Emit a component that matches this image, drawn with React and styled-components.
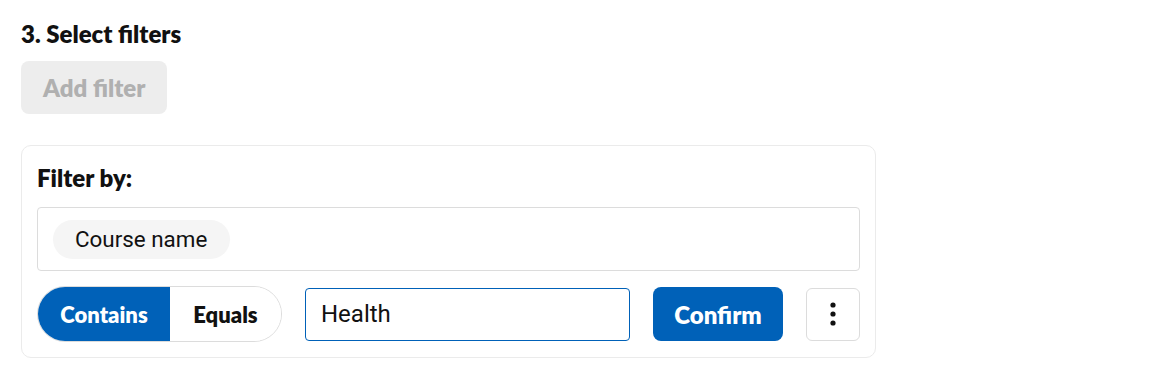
import React from 'react';
import styled, { createGlobalStyle } from 'styled-components';

const GlobalStyle = createGlobalStyle`
  body {
    margin: 0;
    background: #ffffff;
    font-family: 'Lato', 'Liberation Sans', sans-serif;
    color: #111111;
  }
`;

const Page = styled.div`
  padding: 20px 21px;
  width: 855px;
`;

const Heading = styled.h3`
  margin: 0;
  font-family: 'Lato', sans-serif;
  font-weight: 800;
  font-size: 24px;
  line-height: 28px;
  color: #111111;
`;

const AddButton = styled.button`
  margin-top: 13px;
  height: 53px;
  padding: 0 22px;
  border: none;
  border-radius: 8px;
  background: #ededed;
  color: #b0b0b0;
  font-family: 'Lato', sans-serif;
  font-weight: 800;
  font-size: 24px;
  cursor: not-allowed;
`;

const Card = styled.div`
  margin-top: 31px;
  border: 1px solid #ebebeb;
  border-radius: 10px;
  padding: 18px 15px 15px;
  display: flex;
  flex-direction: column;
`;

const Label = styled.div`
  font-family: 'Lato', sans-serif;
  font-weight: 800;
  font-size: 24px;
  line-height: 28px;
`;

const FieldBox = styled.div`
  margin-top: 15px;
  height: 62px;
  border: 1px solid #dcdcdc;
  border-radius: 4px;
  padding: 0 15px;
  display: flex;
  align-items: center;
`;

const Chip = styled.span`
  height: 39px;
  padding: 0 23px 0 22px;
  border-radius: 20px;
  background: #f5f5f5;
  display: inline-flex;
  align-items: center;
  font-family: 'Roboto', sans-serif;
  font-size: 22.4px;
  color: #111111;
`;

const Row = styled.div`
  margin-top: 15px;
  display: flex;
  align-items: center;
  gap: 23px;
`;

const Segmented = styled.div`
  height: 54px;
  display: flex;
  border: 1px solid #dcdcdc;
  border-radius: 28px;
  overflow: hidden;
`;

const Segment = styled.button`
  width: ${p => p.$w}px;
  border: none;
  background: ${p => (p.$active ? '#0061b8' : '#ffffff')};
  color: ${p => (p.$active ? '#ffffff' : '#111111')};
  font-family: 'Lato', sans-serif;
  font-weight: 800;
  font-size: 22px;
  padding: 0;
`;

const TextInput = styled.input`
  box-sizing: border-box;
  width: 325px;
  height: 53px;
  border: 1px solid #0061b8;
  border-radius: 4px;
  padding: 0 15px;
  font-family: 'Roboto', sans-serif;
  font-size: 24px;
  color: #111111;
  outline: none;
`;

const ConfirmButton = styled.button`
  width: 130px;
  height: 54px;
  border: none;
  border-radius: 8px;
  background: #0061b8;
  color: #ffffff;
  font-family: 'Lato', sans-serif;
  font-weight: 800;
  font-size: 24px;
`;

const MenuButton = styled.button`
  width: 54px;
  height: 53px;
  border: 1px solid #dcdcdc;
  border-radius: 6px;
  background: #ffffff;
  display: flex;
  align-items: center;
  justify-content: center;
  padding: 0;
`;

const Kebab = () => (
  <svg width="6" height="24" viewBox="0 0 6 24">
    <circle cx="3" cy="3" r="2.6" fill="#111" />
    <circle cx="3" cy="12" r="2.6" fill="#111" />
    <circle cx="3" cy="21" r="2.6" fill="#111" />
  </svg>
);

export default function App() {
  return (
    <Page>
      <GlobalStyle />
      <Heading>3. Select filters</Heading>
      <AddButton disabled>Add filter</AddButton>
      <Card>
        <Label>Filter by:</Label>
        <FieldBox>
          <Chip>Course name</Chip>
        </FieldBox>
        <Row>
          <Segmented>
            <Segment $active $w={132}>Contains</Segment>
            <Segment $w={111}>Equals</Segment>
          </Segmented>
          <TextInput defaultValue="Health" />
          <ConfirmButton>Confirm</ConfirmButton>
          <MenuButton aria-label="More options">
            <Kebab />
          </MenuButton>
        </Row>
      </Card>
    </Page>
  );
}
